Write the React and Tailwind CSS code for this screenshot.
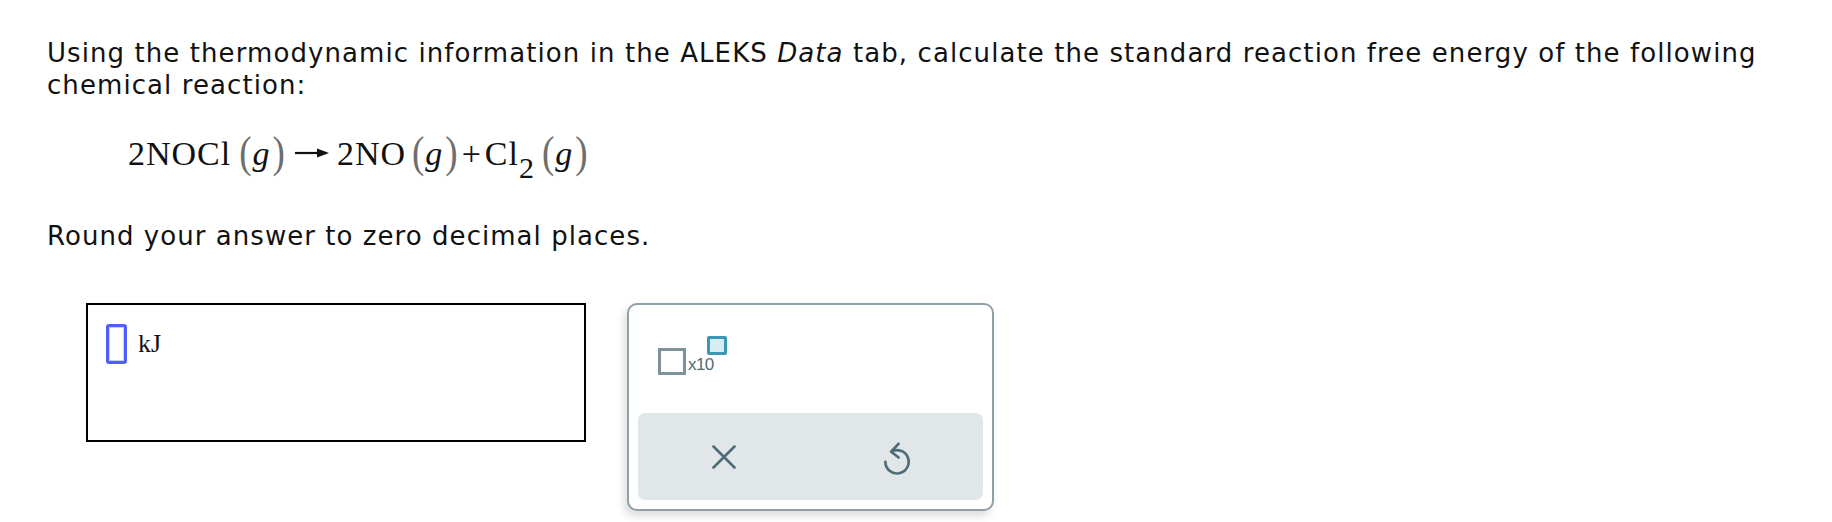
import React from "react";

const Paren = ({ children }) => (
  <span className="inline-block text-[37px] leading-none text-[#6e6e6e] scale-y-[1.18] align-[-1px]">
    {children}
  </span>
);

const Phase = ({ className = "" }) => (
  <span className={`inline-flex items-baseline ${className}`}>
    <Paren>(</Paren>
    <span className="italic ml-[1px] mr-[3px]">g</span>
    <Paren>)</Paren>
  </span>
);

const Arrow = () => (
  <svg width="34" height="12" viewBox="0 0 34 12" className="inline-block ml-[10px] mr-[8px] align-[6px]">
    <line x1="0" y1="6" x2="25" y2="6" stroke="#111" strokeWidth="2.2" />
    <path d="M22 1.5 L34 6 L22 10.5 Z" fill="#111" />
  </svg>
);

const Equation = () => (
  <div className="pl-[81px] mt-[33px] h-[40px] leading-[40px] text-[34px] text-[#111] whitespace-nowrap font-['Liberation_Serif',serif]">
    <span className="tracking-[1px]">2NOCl</span>
    <Phase className="ml-[8px]" />
    <Arrow />
    <span className="tracking-[1px]">2NO</span>
    <Phase className="ml-[6px]" />
    <span className="mx-[4px]">+</span>
    <span className="tracking-[1px]">Cl</span>
    <span className="relative top-[13px] text-[30px]">2</span>
    <Phase className="ml-[8px]" />
  </div>
);

const AnswerBox = () => (
  <div className="w-[500px] h-[139px] border-2 border-black flex items-start pt-[19px] pl-[18px]">
    <div className="w-[21px] h-[40px] rounded-[3px] border-[3px] border-[#4e5ef6] shadow-[inset_0_0_0_1px_#c8cdfb]" />
    <span className="ml-[11px] mt-[7px] text-[26px] leading-[26px] text-[#111] font-['Liberation_Serif',serif]">
      kJ
    </span>
  </div>
);

const XIcon = () => (
  <svg width="24" height="24" viewBox="0 0 24 24" fill="none" stroke="#4f6b78" strokeWidth="2.6" strokeLinecap="round">
    <path d="M1.5 1.5 L22.5 22.5 M22.5 1.5 L1.5 22.5" />
  </svg>
);

const UndoIcon = () => (
  <svg width="30" height="36" viewBox="0 0 28 34" fill="none" stroke="#4f6b78" strokeWidth="2.5" strokeLinecap="round" strokeLinejoin="round">
    <path d="M8.5 12 A11 11 0 1 1 3 21.5" />
    <path d="M15.5 4.5 L8.5 12 L15.5 17.5" />
  </svg>
);

const Keypad = () => (
  <div className="w-[367px] h-[208px] border-2 border-[#8ea1a9] rounded-[10px] bg-white p-[9px] flex flex-col shadow-[-3px_5px_9px_rgba(0,0,0,0.14)]">
    <div className="h-[98px] pl-[20px] pt-[22px] flex items-start">
      <div className="mt-[12px] w-[28px] h-[27px] border-[3px] border-[#7f939c]" />
      <span className="ml-[2px] mt-[21px] text-[17px] leading-[16px] text-[#4f6b75] font-['Liberation_Sans',sans-serif] tracking-[-0.6px]">
        x10
      </span>
      <div className="ml-[-7px] w-[20px] h-[19px] border-[3px] border-[#3d97b0] bg-[#d5eef4] rounded-[2px]" />
    </div>
    <div className="h-[87px] mt-[1px] bg-[#e1e6e8] rounded-[7px] grid grid-cols-2">
      <div className="flex items-center justify-center">
        <XIcon />
      </div>
      <div className="flex items-center justify-center">
        <UndoIcon />
      </div>
    </div>
  </div>
);

export default function App() {
  return (
    <div className="w-[1832px] h-[522px] bg-white overflow-hidden pl-[47px] pt-[37px] font-['DejaVu_Sans',sans-serif] text-[#111]">
      <div className="text-[26px] leading-[32px] tracking-[1.08px] whitespace-nowrap">
        <div>
          <span>Using the thermodynamic information in the ALEKS </span>
          <i>Data</i>
          <span> tab, calculate the standard reaction free energy of the following</span>
        </div>
        <div>chemical reaction:</div>
      </div>
      <Equation />
      <p className="mt-[46px] text-[26px] leading-[32px] tracking-[1.05px]">Round your answer to zero decimal places.</p>
      <div className="mt-[51px] ml-[39px] flex items-start gap-[41px]">
        <AnswerBox />
        <Keypad />
      </div>
    </div>
  );
}
